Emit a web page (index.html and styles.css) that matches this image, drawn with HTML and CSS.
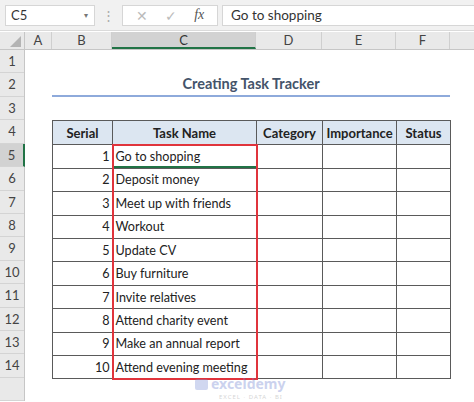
FILE: index.html
```html
<!DOCTYPE html>
<html lang="en">
  <head>
    <meta charset="UTF-8" />
    <title>Creating Task Tracker</title>
    <link rel="stylesheet" href="styles.css">
  </head>
  <body>
    <div class="formula-bar">
      <div class="name-box">C5 <span class="caret">&#9662;</span></div>
      <div class="grip">&#8942;</div>
      <div class="fx-box">
        <span class="fx-icon">&#10005;</span>
        <span class="fx-icon">&#10003;</span>
        <span class="fx-label">fx</span>
      </div>
      <div class="formula-text">Go to shopping</div>
    </div>

    <div class="col-heads">
      <div class="corner"><span class="corner-tri"></span></div>
      <div class="col-head col-a">A</div>
      <div class="col-head col-b">B</div>
      <div class="col-head col-c active">C</div>
      <div class="col-head col-d">D</div>
      <div class="col-head col-e">E</div>
      <div class="col-head col-f">F</div>
      <div class="col-head col-rest"></div>
    </div>

    <div class="sheet">
      <div class="row-heads" id="rowHeads"></div>

      <div class="cells">
        <div class="row"></div>
        <div class="row title-row">
          <div class="title">Creating Task Tracker</div>
        </div>
        <div class="row"></div>

        <table class="tracker">
          <thead>
            <tr>
              <th class="c-serial">Serial</th>
              <th class="c-task">Task Name</th>
              <th class="c-cat">Category</th>
              <th class="c-imp">Importance</th>
              <th class="c-status">Status</th>
            </tr>
          </thead>
          <tbody id="taskRows"></tbody>
        </table>

        <div class="watermark">
          <span class="wm-logo"></span>
          <div class="wm-words">
            <div class="wm-text">exceldemy</div>
            <div class="wm-sub">EXCEL · DATA · BI</div>
          </div>
        </div>
      </div>
    </div>

    <script>
      // task list for the tracker
      const tasks = [
        "Go to shopping",
        "Deposit money",
        "Meet up with friends",
        "Workout",
        "Update CV",
        "Buy furniture",
        "Invite relatives",
        "Attend charity event",
        "Make an annual report",
        "Attend evening meeting"
      ];

      const body = document.getElementById('taskRows');
      body.innerHTML = tasks.map((t, i) => `
        <tr>
          <td class="num">${i + 1}</td>
          <td class="task${i === 0 ? ' first selected' : ''}${i === tasks.length - 1 ? ' last' : ''}">${t}</td>
          <td></td><td></td><td></td>
        </tr>`).join('');

      const heads = document.getElementById('rowHeads');
      let html = '';
      for (let r = 1; r <= 15; r++) {
        html += `<div class="row-head${r === 5 ? ' active' : ''}">${r <= 14 ? r : ''}</div>`;
      }
      heads.innerHTML = html;
    </script>
  </body>
</html>
```

FILE: styles.css
```css
body {
  margin: 0;
  width: 474px;
  height: 402px;
  overflow: hidden;
  background: #fff;
  font-family: "Lato", "Open Sans", sans-serif;
  color: #222;
}

/* formula bar */
.formula-bar {
  height: 31px;
  background: #f1f1f1;
  display: flex;
  align-items: center;
  padding-left: 5px;
  box-sizing: border-box;
  border-bottom: 1px solid #dadada;
}
.name-box {
  width: 90px;
  height: 21px;
  background: #fff;
  border: 1px solid #d6d6d6;
  box-sizing: border-box;
  font-size: 13px;
  line-height: 19px;
  padding-left: 5px;
  color: #333;
  position: relative;
}
.caret {
  position: absolute;
  right: 6px;
  top: 0;
  font-size: 8px;
  color: #777;
}
.grip {
  width: 27px;
  text-align: center;
  color: #aaa;
  font-size: 13px;
}
.fx-box {
  width: 96px;
  height: 21px;
  background: #fff;
  border: 1px solid #d6d6d6;
  box-sizing: border-box;
  display: flex;
  align-items: center;
  justify-content: space-around;
  padding: 0 4px;
}
.fx-icon {
  color: #bbb;
  font-size: 14px;
}
.fx-label {
  font-family: "Liberation Serif", serif;
  font-style: italic;
  color: #555;
  font-size: 14px;
}
.formula-text {
  margin-left: 4px;
  flex: 1;
  height: 21px;
  background: #fff;
  border: 1px solid #d6d6d6;
  border-right: none;
  box-sizing: border-box;
  font-size: 13.5px;
  line-height: 19px;
  padding-left: 8px;
  color: #333;
}

/* column headers */
.col-heads {
  display: flex;
  height: 18px;
  margin-top: 1px;
  background: #e9e9e9;
  border-bottom: 1px solid #c6c6c6;
  box-sizing: border-box;
}
.corner {
  width: 25px;
  border-right: 1px solid #c6c6c6;
  box-sizing: border-box;
  position: relative;
}
.corner-tri {
  position: absolute;
  right: 3px;
  bottom: 2px;
  border-left: 11px solid transparent;
  border-bottom: 11px solid #b4b4b4;
}
.col-head {
  box-sizing: border-box;
  border-right: 1px solid #cfcfcf;
  text-align: center;
  font-size: 13px;
  line-height: 17px;
  color: #444;
}
.col-head.active {
  background: #d2d2d2;
  border-bottom: 2px solid #217346;
  color: #333;
}
.col-a { width: 27px; }
.col-b { width: 60px; }
.col-c { width: 144px; }
.col-d { width: 66px; }
.col-e { width: 74px; }
.col-f { width: 54px; }
.col-rest { flex: 1; border-right: none; }

/* grid */
.sheet {
  display: flex;
  position: relative;
}
.row-heads {
  width: 25px;
  background: #e9e9e9;
  border-right: 1px solid #c6c6c6;
  box-sizing: border-box;
}
.row-head {
  height: 23.43px;
  box-sizing: border-box;
  border-bottom: 1px solid #d4d4d4;
  text-align: center;
  font-size: 13px;
  line-height: 23px;
  color: #444;
}
.row-head.active {
  background: #d2d2d2;
  border-right: 2px solid #217346;
  margin-right: -1px;
}
.cells {
  flex: 1;
  position: relative;
}
.row {
  height: 23.43px;
}
.title-row {
  margin-left: 27px;
  width: 398px;
  border-bottom: 2px solid #8eaadb;
  box-sizing: border-box;
}
.title {
  text-align: center;
  font-weight: bold;
  font-size: 14.5px;
  line-height: 22px;
  color: #44546a;
}

/* tracker table */
.tracker {
  margin-left: 27px;
  border-collapse: collapse;
  table-layout: fixed;
  width: 398px;
  font-size: 12.6px;
}
.tracker th,
.tracker td {
  border: 1px solid #5a5a5a;
  height: 23.43px;
  padding: 0 3px;
  box-sizing: border-box;
  white-space: nowrap;
  overflow: hidden;
}
.tracker th {
  background: #dce6f1;
  font-weight: bold;
  font-size: 13px;
  height: 24px;
  padding: 0 1px;
  text-align: center;
}
.c-serial { width: 60px; }
.c-task { width: 144px; }
.c-cat { width: 66px; }
.c-imp { width: 74px; }
.c-status { width: 54px; }
.tracker td.num {
  text-align: right;
  padding-right: 2px;
}
.tracker td.task {
  border-left: 2px solid #e0343c;
  border-right: 2px solid #e0343c;
  padding-left: 2px;
}
.tracker td.first { border-top: 2px solid #e0343c; }
.tracker td.last { border-bottom: 2px solid #e0343c; }
.tracker td.selected { box-shadow: inset 0 -2px 0 #217346; }

/* watermark */
.watermark {
  position: absolute;
  left: 170px;
  top: 324px;
  display: flex;
  align-items: flex-start;
  gap: 3px;
  opacity: 0.35;
}
.wm-logo {
  width: 13px;
  height: 11px;
  margin-top: 5px;
  background: #7b8fd6;
  border-radius: 2px;
}
.wm-text {
  color: #6d7fd0;
  font-family: "Noto Sans", sans-serif;
  font-weight: bold;
  font-size: 14px;
  line-height: 19px;
}
.wm-sub {
  font-family: "Noto Sans", sans-serif;
  font-size: 6px;
  line-height: 8px;
  letter-spacing: 1px;
  color: #888;
  padding-left: 8px;
}
```
